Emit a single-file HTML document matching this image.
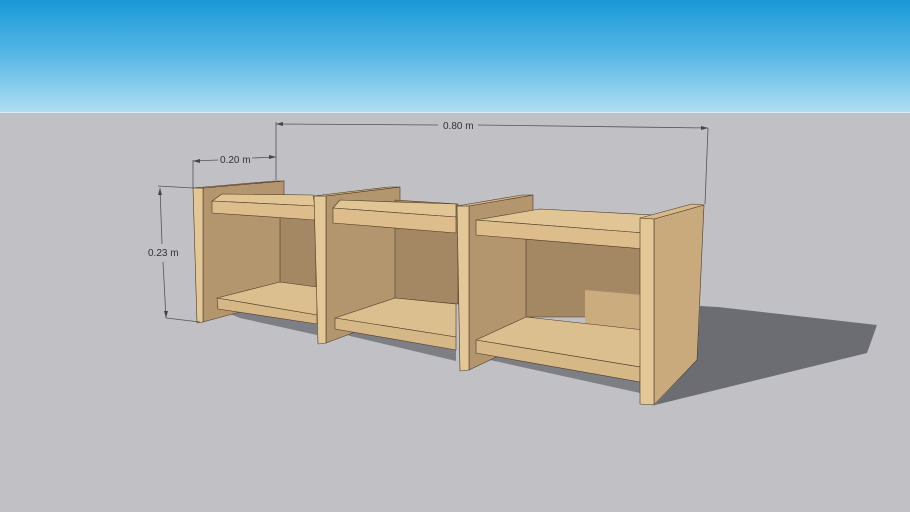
<!DOCTYPE html>
<html><head><meta charset="utf-8"><style>
html,body{margin:0;padding:0;width:910px;height:512px;overflow:hidden;background:#c0c0c5}
svg{display:block}
text{font-family:"Liberation Sans",sans-serif;font-size:10px;fill:#333}
</style></head><body>
<svg width="910" height="512" viewBox="0 0 910 512" xmlns="http://www.w3.org/2000/svg">
<defs>
<linearGradient id="sky" x1="0" y1="0" x2="0" y2="1">
<stop offset="0" stop-color="#1998d8"/><stop offset="0.5" stop-color="#5ab8e6"/><stop offset="1" stop-color="#b2def2"/>
</linearGradient>
</defs>
<rect x="0" y="0" width="910" height="113" fill="url(#sky)"/>
<rect x="0" y="113" width="910" height="399" fill="#c0c0c5"/>
<line x1="0" y1="112.5" x2="910" y2="112.5" stroke="#d8eef8" stroke-width="1"/>

<!-- shadows -->
<polygon points="700,306 718,307 877,325 867,353 655,405 697,360" fill="#6c6c73"/>
<polygon points="218,309 317,324 317,335 240,318" fill="#7e7e85"/>
<polygon points="335,329 456,350 456,361 350,336" fill="#7e7e85"/>
<polygon points="476,353 640,382 640,393 490,360" fill="#7e7e85"/>

<g stroke="#4a3a28" stroke-width="0.6" stroke-linejoin="round">
<!-- Cell 1 -->
<polygon points="203,188 284,181 284,300 240,312 203,322" fill="#b3966e"/>
<polygon points="280,200 316,200 316,292 280,282" fill="#a48863"/>
<polygon points="222,194 313,195 315,206 212,201" fill="#e2c594"/>
<polygon points="212,201 315,206 315,220 212,213" fill="#dcbd8b"/>
<polygon points="280,282 317,287 317,315 217,298" fill="#dcbf8f"/>
<polygon points="217,298 317,315 317,324 218,309" fill="#d6b887"/>
<polygon points="193,188 203,188 203,322 197,323" fill="#e4c796"/>
<polygon points="193,188 203,188 284,181 275,181" fill="#d4b685"/>

<!-- Cell 2 -->
<polygon points="326,196 400,187 400,310 350,334 326,343" fill="#b3966e"/>
<polygon points="395,200 458,204 458,304 395,298" fill="#a48863"/>
<polygon points="340,200 456,204 456,217 333,208" fill="#e2c594"/>
<polygon points="333,208 456,217 456,233 333,223" fill="#dcbd8b"/>
<polygon points="395,298 456,304 456,337 335,318" fill="#dcbf8f"/>
<polygon points="335,318 456,337 456,350 335,329" fill="#d6b887"/>
<polygon points="314,196 326,196 326,343 318,344" fill="#e4c796"/>
<polygon points="314,196 326,196 400,187 389,187" fill="#d4b685"/>

<!-- Cell 3 -->
<polygon points="469,206 533,195 533,340 490,360 469,370" fill="#b3966e"/>
<polygon points="526,218 644,225 644,317 526,317" fill="#a48863"/>
<polygon points="585,290 644,295 644,330 585,325" fill="#caac7e" stroke="none"/>
<polygon points="540,209 653,215 644,233 476,220" fill="#e2c594"/>
<polygon points="476,220 644,233 644,249 476,235" fill="#dcbd8b"/>
<polygon points="526,317 644,330 640,367 476,340" fill="#dcbf8f"/>
<polygon points="476,340 640,367 640,382 476,353" fill="#d6b887"/>
<polygon points="457,206 469,206 469,370 460,371" fill="#e4c796"/>
<polygon points="457,206 469,206 533,195 522,195" fill="#d4b685"/>

<!-- Panel 4 -->
<polygon points="654,219 704,205 697,360 654,405" fill="#c8aa7c"/>
<polygon points="640,218 654,219 654,405 640,404" fill="#e4c796"/>
<polygon points="640,218 654,219 704,205 692,204" fill="#d8ba89"/>
</g>

<!-- dimensions -->
<g stroke="#555" stroke-width="0.8" fill="none">
<line x1="276" y1="124" x2="438" y2="125"/>
<line x1="478" y1="125" x2="708" y2="128"/>
<line x1="276" y1="122" x2="276" y2="180"/>
<line x1="708" y1="128" x2="705" y2="204"/>
<line x1="193" y1="161" x2="218" y2="160"/>
<line x1="252" y1="158" x2="276" y2="157"/>
<line x1="193" y1="160" x2="193" y2="188"/>
<line x1="158" y1="186" x2="193" y2="188"/>
<line x1="166" y1="318" x2="200" y2="322"/>
<line x1="160" y1="188" x2="162" y2="244"/>
<line x1="163" y1="262" x2="166" y2="318"/>
</g>
<g fill="#444">
<polygon points="276,124 283,122 283,126"/>
<polygon points="708,128 701,126 701,130"/>
<polygon points="193,161 200,159 200,163"/>
<polygon points="276,157 269,155 269,159"/>
<polygon points="160,188 158,195 162,195"/>
<polygon points="166,318 164,311 168,311"/>
</g>
<text x="443" y="129">0.80 m</text>
<text x="220" y="163">0.20 m</text>
<text x="148" y="256">0.23 m</text>
</svg>
</body></html>
